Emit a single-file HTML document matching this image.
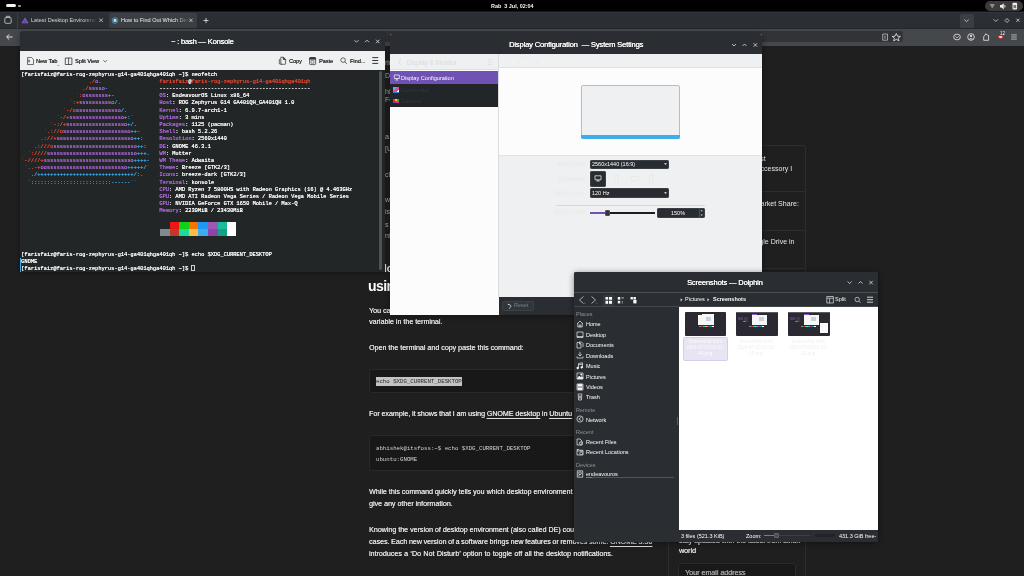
<!DOCTYPE html>
<html><head><meta charset="utf-8">
<style>
*{box-sizing:border-box}
html,body{margin:0;padding:0}
body{width:1024px;height:576px;overflow:hidden;position:relative;background:#1f1f1f;font-family:"Liberation Sans",sans-serif}
.a{position:absolute}
.t{position:absolute;white-space:pre;line-height:1;will-change:transform}
.ptxt,.ptxt2{will-change:transform}
.ptxt{font:7.1px/1 "Liberation Sans";color:#e2e2e2;white-space:pre;text-shadow:0.2px 0 0 #d8d8d8}
.ptxt u{text-decoration-thickness:0.6px;text-underline-offset:1.5px}
.ptxt2{font:7.05px/1 "Liberation Sans";color:#e6e6e6}
.code{background:#181818;border:1px solid #292929;border-radius:3px}
.frag{font:7px/1 "Liberation Sans";color:#b0b0b0}
/* top bar */
#top{left:0;top:0;width:1024px;height:12px;background:linear-gradient(#000 0 11px,#16171a 11px)}
/* firefox */
#tabs{left:0;top:12px;width:1024px;height:17px;background:#2b2e33}
#nav{left:0;top:29px;width:1024px;height:17px;background:#44474c}
#url{left:20px;top:31px;width:883px;height:13px;background:#2b2d31;border-radius:2px}
/* konsole */
#kon{left:20px;top:32px;width:365px;height:240px;background:#232627;overflow:hidden;box-shadow:0 1px 5px rgba(0,0,0,0.35);border-radius:2px 2px 0 0}
#kon .tb{left:0;top:0;width:365px;height:19px;background:#2a2e32}
#kon .tool{left:0;top:19px;width:365px;height:19px;background:#eff0f1}
#term{left:1.1px;top:39.5px;font:5.4px/7.2px "Liberation Mono",monospace;letter-spacing:-0.022px;color:#fcfcfc;white-space:pre;text-shadow:0.2px 0 0 currentColor}
.r{color:#e6452e}.m{color:#ad66dc}.b{color:#36a8f0}
.tl{font:5.5px/1 "Liberation Sans";color:#232629;text-shadow:0.2px 0 0 #232629}
/* settings */
#set{left:390px;top:34px;width:372px;height:281px;background:#fcfcfc;overflow:hidden;box-shadow:0 1px 6px rgba(0,0,0,0.4);border-radius:2px 2px 0 0}
.lbl{font:5.5px/1 "Liberation Sans";color:#fafafa;text-shadow:0 0 0.9px #c4c5c6}
.dd{background:#292c30;border:0.6px solid #3b4045;border-radius:1.2px}
.ddt{font:5.5px/1 "Liberation Sans";color:#fcfcfc}
.plab{font:5.5px/1 "Liberation Sans";color:#8d9094}
.pit{font:5.5px/1 "Liberation Sans";color:#fcfcfc}
.thumb{width:41.5px;height:23.7px;background:#2b2a33;border-radius:1px;overflow:hidden}
.fn{font:4.6px/6px "Liberation Sans";color:#fafafa;text-align:center;text-shadow:0 0 0.4px #e6e6e6}
/* dolphin */
#dol{left:574px;top:272px;width:304px;height:269.8px;background:#2a2e32;overflow:hidden;box-shadow:0 1px 6px rgba(0,0,0,0.45);border-radius:2px 2px 0 0}
</style></head><body>
<!-- page content -->
<div id="page" class="a" style="left:0;top:0;width:1024px;height:576px;background:#1f1f1f">
  <div class="t" style="left:368.4px;top:278.3px;font:bold 14px 'Liberation Sans';letter-spacing:-0.6px;color:#fff">using</div>
  <div class="t" style="left:384px;top:262.5px;font:bold 10px 'Liberation Sans';color:#f4f4f4">lo</div>
  <div class="a ptxt" style="left:368.9px;top:308.0px">You can also check the value of XDG_CURRENT_DESKTOP environment</div>
  <div class="a ptxt" style="left:368.9px;top:319.2px">variable in the terminal.</div>
  <div class="a ptxt" style="left:368.9px;top:345.2px">Open the terminal and copy paste this command:</div>
  <div class="a code" style="left:369px;top:368.5px;width:290px;height:24.5px"></div>
  <div class="t" style="left:376px;top:377px;height:9px;width:86px;background:#c4c4c4;color:#2a2a2a;font:5.73px/9px 'Liberation Mono'">echo $XDG_CURRENT_DESKTOP</div>
  <div class="a ptxt" style="left:368.9px;top:411.3px;word-spacing:-0.22px">For example, it shows that I am using <u>GNOME desktop</u> in <u>Ubuntu</u></div>
  <div class="a code" style="left:369px;top:434.5px;width:290px;height:36.5px"></div>
  <div class="t" style="left:376px;top:444.8px;color:#d4d4d4;font:5.73px 'Liberation Mono'">abhishek@itsfoss:~$ echo $XDG_CURRENT_DESKTOP</div>
  <div class="t" style="left:376px;top:455.5px;color:#d4d4d4;font:5.73px 'Liberation Mono'">ubuntu:GNOME</div>
  <div class="a ptxt" style="left:368.9px;top:489.3px">While this command quickly tells you which desktop environment is being used, it doesn't</div>
  <div class="a ptxt" style="left:368.9px;top:501.0px">give any other information.</div>
  <div class="a ptxt" style="left:368.9px;top:527.3px">Knowing the version of desktop environment (also called DE) could be helpful in some</div>
  <div class="a ptxt" style="left:368.9px;top:538.8px;word-spacing:-0.36px">cases. Each new version of a software brings new features or removes some. <u>GNOME 3.36</u></div>
  <div class="a ptxt" style="left:368.9px;top:550.8px;word-spacing:0.36px">introduces a ‘Do Not Disturb’ option to toggle off all the desktop notifications.</div>
  <!-- sidebar -->
  <div class="a" style="left:668px;top:145px;width:138px;height:124px;border:1px solid #2d2d2d;border-radius:3px"></div>
  <div class="a" style="left:668px;top:191px;width:138px;height:1px;background:#2d2d2d"></div>
  <div class="a" style="left:668px;top:230px;width:138px;height:1px;background:#2d2d2d"></div>
  <div class="t ptxt2" style="right:258px;top:154.5px">This Is The Best</div>
  <div class="t ptxt2" style="right:231.5px;top:164.5px">The Most Useful Accessory I</div>
  <div class="t ptxt2" style="right:225px;top:199.5px">Linux Desktop Market Share:</div>
  <div class="t ptxt2" style="right:229.5px;top:237.5px">Using Google Drive in</div>
  <div class="a" style="left:668px;top:269px;width:1px;height:307px;background:#2d2d2d"></div>
  <div class="a" style="left:805px;top:269px;width:1px;height:307px;background:#2d2d2d"></div>
  <div class="a ptxt" style="left:678.5px;top:538.3px">stay updated with the latest from Linux</div>
  <div class="a ptxt" style="left:678.5px;top:548px">world</div>
  <div class="a" style="left:678px;top:562.5px;width:118px;height:20px;background:#191919;border:1px solid #2b2b2b;border-radius:3px"></div>
  <div class="a ptxt" style="left:685px;top:570px;color:#8a8a8a">Your email address</div>
  <!-- fragments between konsole and settings -->
  <div class="t frag" style="left:384.5px;top:59px">rir</div>
  <div class="t frag" style="left:384.5px;top:72px">DU</div>
  <div class="t frag" style="left:384.5px;top:88px">hi</div>
  <div class="t frag" style="left:384.5px;top:96px">Fe</div>
  <div class="t frag" style="left:384.5px;top:133px">a</div>
  <div class="t frag" style="left:384.5px;top:145px">[U</div>
  <div class="t frag" style="left:384.5px;top:171px">cl</div>
  <div class="t frag" style="left:384.5px;top:196px">w</div>
  <div class="t frag" style="left:384.5px;top:208px">is</div>
  <div class="t frag" style="left:384.5px;top:221px">s</div>
  <div class="t frag" style="left:384.5px;top:232px">nf</div>
</div>

<!-- top bar -->
<div id="top" class="a">
  <div class="a" style="left:6px;top:4px;width:10px;height:3px;background:#f4f4f4;border-radius:1.5px"></div>
  <div class="a" style="left:18.4px;top:4.8px;width:2.4px;height:2.2px;background:#9c9c9c;border-radius:1.1px"></div>
  <div class="t" style="left:490.5px;top:4px;font:bold 5.45px/1 'Liberation Sans';color:#f4f4f4">Rab  3 Jul, 02:04</div>
  <div class="a" style="left:985px;top:1px;width:37.5px;height:9.5px;background:#3b3b3b;border-radius:5px"></div>
  <svg class="a" style="left:985px;top:1px" width="38" height="10">
    <path d="M4.5 3 L10 3 L7.25 7.5 Z" fill="#8d8d8d"/>
    <path d="M15 4 h1.5 l2.2 -1.8 v6.2 l-2.2 -1.8 h-1.5 z M19.5 3.5 a2 2 0 0 1 0 3.5" fill="#f0f0f0"/>
    <rect x="27.5" y="1.8" width="4.6" height="6.6" rx="0.8" fill="#f0f0f0"/><rect x="28.4" y="4" width="2.8" height="3.2" fill="#777"/>
  </svg>
</div>
<!-- firefox tab bar -->
<div id="tabs" class="a">
  <div class="a" style="left:0;top:0;width:1024px;height:1px;background:#31343a"></div>
  <div class="a" style="left:0;top:16px;width:1024px;height:1px;background:#25272b"></div>
  <div class="a" style="left:16.5px;top:0;width:1px;height:17px;background:#3a3d42"></div>
  <svg class="a" style="left:0;top:0" width="230" height="17" fill="none" stroke="#cfd0d2" stroke-width="0.8">
    <rect x="4.8" y="5.5" width="6.4" height="5.8" rx="1.3"/><path d="M6.3 5.5 v-1.2 h3.4 v1.2"/>
    <path d="M25 5.5 L28.5 11.3 L21.5 11.3 Z" fill="#8d5fd6" stroke="none"/><path d="M25 7.2 L27.2 10.8 L22.8 10.8 Z" fill="#6a43b0" stroke="none"/>
    <path d="M99.3 6.5 L102.8 10 M102.8 6.5 L99.3 10"/>
  </svg>
  <div class="t" style="left:31px;top:6.3px;width:66px;overflow:hidden;font:5.55px/1 'Liberation Sans';color:#d4d5d7;-webkit-mask-image:linear-gradient(90deg,#000 80%,transparent)">Latest Desktop Environment</div>
  <div class="a" style="left:109px;top:1px;width:88px;height:14.5px;background:#3b3e43;border-radius:2px"></div>
  <svg class="a" style="left:0;top:0" width="230" height="17" fill="none" stroke="#d8d9db" stroke-width="0.8">
    <circle cx="115" cy="8.5" r="3" fill="#2d6b9e" stroke="#6b8fb0" stroke-width="0.6"/><path d="M113.5 8 q1.5 -2 3 0 v2 h-3 z" fill="#e9b52c" stroke="none"/><circle cx="115" cy="8" r="1" fill="#f2f2f2" stroke="none"/>
    <path d="M189.3 6.7 L192.6 10 M192.6 6.7 L189.3 10"/>
    <path d="M206 6 V11 M203.5 8.5 H208.5" stroke-width="0.9"/>
  </svg>
  <div class="t" style="left:120.5px;top:6.3px;width:68px;overflow:hidden;font:5.55px/1 'Liberation Sans';color:#eeeeef;-webkit-mask-image:linear-gradient(90deg,#000 80%,transparent)">How to Find Out Which Desktop</div>
  <div class="a" style="left:959.5px;top:1.5px;width:14px;height:14px;background:#3b3e43;border-radius:2px"></div>
  <svg class="a" style="left:900px;top:0" width="124" height="17" fill="none" stroke="#d8d9db" stroke-width="0.8">
    <path d="M64.3 7.5 L66.5 9.7 L68.7 7.5"/>
    <path d="M93.6 7.3 L95.8 9.5 L98 7.3"/>
    <path d="M107 6.5 L109 8.5 L107 10.5 L105 8.5 Z"/>
    <path d="M116.3 6.6 L119.5 9.8 M119.5 6.6 L116.3 9.8"/>
  </svg>
</div>
<div id="nav" class="a">
  <div class="a" style="left:20px;top:2.3px;width:883px;height:11px;background:#323337;border-radius:2px"></div>
  <svg class="a" style="left:0;top:0" width="1024" height="17" fill="none" stroke="#eeeeef" stroke-width="0.9">
    <path d="M6.8 8 H12.6 M9.3 5.3 L6.6 8 L9.3 10.7"/>
    <path d="M882.7 5 h4.8 v6.2 h-4.8 z M885 6.5 v3.4" stroke="#d0d1d3" stroke-width="0.7"/>
    <path d="M896.3 4.5 L897.6 7.2 L900.4 7.4 L898.2 9.2 L899 11.9 L896.3 10.4 L893.6 11.9 L894.4 9.2 L892.2 7.4 L895 7.2 Z" stroke-width="0.8"/>
    <rect x="953.8" y="5.3" width="6.4" height="5.4" rx="2.4" stroke-width="0.8"/><path d="M955.4 7.3 L957 8.9 L958.6 7.3" stroke-width="0.7"/>
    <circle cx="971" cy="8" r="3.3" stroke-width="0.8"/><circle cx="971" cy="7" r="1.1" fill="#eee" stroke="none"/><path d="M968.9 10.3 q2.1 -2 4.2 0" fill="#eee" stroke="none"/>
    <path d="M983.7 11.3 V7.5 L985 6.3 L985.6 4.8 L987.2 6 L988.6 6.3 L988.6 11.3 Z" stroke-width="0.8"/>
    <path d="M997.6 6.8 a3 3 0 0 0 6 0 z" fill="#d9322c" stroke="none"/><path d="M998.8 7.2 a1.8 1.8 0 0 0 3.6 0 z" fill="#f3f3f3" stroke="none"/>
    <path d="M1011.2 5.9 h5.6 M1011.2 8 h5.6 M1011.2 10.1 h5.6" stroke="#d4d5d7" stroke-width="0.75"/>
  </svg>
  <div class="t" style="left:999.6px;top:2.6px;font:4.6px/1 'Liberation Sans';color:#f2f2f2">12</div>
</div>

<!-- konsole -->
<div id="kon" class="a">
  <div class="a tb"></div>
  <div class="t" style="left:151px;top:6.2px;font:7.6px/1 'Liberation Sans';letter-spacing:-0.22px;color:#fcfcfc;text-shadow:0.2px 0 0 #fcfcfc">~ : bash — Konsole</div>
  <svg class="a" style="left:0;top:0" width="365" height="19" fill="none" stroke="#dfe1e3" stroke-width="0.8">
    <path d="M334.5 8.2 L336.5 10.2 L338.5 8.2"/>
    <path d="M345 10.2 L347 8.2 L349 10.2"/>
    <path d="M356 7.7 L359.5 11.2 M359.5 7.7 L356 11.2"/>
  </svg>
  <div class="a tool"></div>
  <svg class="a" style="left:0;top:19px" width="365" height="19" fill="none" stroke="#31363b" stroke-width="0.7">
    <path d="M7.5 6.5 h4 l2 2 v5 h-6 z M9 8.5 v3 M8 10 h2" />
    <path d="M45.3 7 h6.6 v6.5 h-6.6 z M48.6 7 v6.5" stroke-width="0.8"/>
    <path d="M83.3 9.2 L85.2 11 L87.1 9.2"/>
    <path d="M37.5 14.2 l0.8 0.8 l0.8 -0.8" stroke-width="0.5"/>
    <path d="M259.3 8 V12.3 Q259.3 13.2 260.2 13.2 H262" stroke-width="0.75"/>
    <path d="M260.8 6.2 H263.3 L265.6 8.5 V12.6 Q265.6 13.3 264.9 13.3 H261.5 Q260.8 13.3 260.8 12.6 Z" stroke-width="0.75"/>
    <path d="M263.3 6.2 V8.5 H265.6 Z" fill="#31363b"/>
    <rect x="289.6" y="6.6" width="6" height="7" rx="0.8" stroke-width="0.75"/>
    <path d="M289.6 7.4 Q289.6 6.6 290.4 6.6 H294.8 Q295.6 6.6 295.6 7.4 V8.2 H289.6 Z" fill="#31363b"/>
    <path d="M291 9.6 h3 v2.6 h-3 z" stroke-width="0.5"/>
    <circle cx="323.1" cy="9.1" r="2.3" stroke-width="0.75"/><path d="M324.8 10.8 L326.8 12.8" stroke-width="0.8"/>
    <path d="M352.3 6.6 h5.9 M352.3 9.5 h5.9 M352.3 12.4 h5.9" stroke-width="1"/>
  </svg>
  <div class="t tl" style="left:16.2px;top:26.5px">New Tab</div>
  <div class="t tl" style="left:54.8px;top:26.5px">Split View</div>
  <div class="t tl" style="left:269px;top:26.5px">Copy</div>
  <div class="t tl" style="left:299px;top:26.5px">Paste</div>
  <div class="t tl" style="left:330px;top:26.5px">Find...</div>
  <div class="a" style="left:359px;top:39px;width:3px;height:199px;background:#4d5256;border-radius:1.5px"></div>
  <div class="a" style="left:0;top:225.5px;width:1.3px;height:14.5px;background:#3daee9"></div>
  <div class="a" style="left:171px;top:232.8px;width:4px;height:6.7px;border:0.8px solid #d0d0d0"></div>
    <div class="a" style="left:139.6px;top:189.7px;width:76.8px;height:7.2px;background:linear-gradient(90deg,#232627 0 9.6px,#ed1515 9.6px 19.2px,#11d116 19.2px 28.8px,#f67400 28.8px 38.4px,#1d99f3 38.4px 48px,#9b59b6 48px 57.6px,#1abc9c 57.6px 67.2px,#fcfcfc 67.2px 76.8px)"></div>
  <div class="a" style="left:139.6px;top:196.9px;width:76.8px;height:7.2px;background:linear-gradient(90deg,#7f8c8d 0 9.6px,#c0392b 9.6px 19.2px,#1cdc9a 19.2px 28.8px,#fdbc4b 28.8px 38.4px,#3daee9 38.4px 48px,#8e44ad 48px 57.6px,#16a085 57.6px 67.2px,#ffffff 67.2px 76.8px)"></div>
  <div id="term" class="a">[farisfaiz@faris-rog-zephyrus-g14-ga401qhga401qh ~]$ neofetch
<span class="r">                     ./</span><span class="m">o</span><span class="b">.</span>                  <span class="r">farisfaiz</span>@<span class="r">faris-rog-zephyrus-g14-ga401qhga401qh</span>
<span class="r">                   ./</span><span class="m">sssso</span><span class="b">-</span>                -----------------------------------------------
<span class="r">                 `:</span><span class="m">osssssss+</span><span class="b">-</span>              <span class="m">OS</span>: EndeavourOS Linux x86_64
<span class="r">               `:+</span><span class="m">sssssssssso</span><span class="b">/.</span>            <span class="m">Host</span>: ROG Zephyrus G14 GA401QH_GA401QH 1.0
<span class="r">             `-/o</span><span class="m">ssssssssssssso</span><span class="b">/.</span>          <span class="m">Kernel</span>: 6.9.7-arch1-1
<span class="r">           `-/+</span><span class="m">sssssssssssssssso</span><span class="b">+:`</span>        <span class="m">Uptime</span>: 3 mins
<span class="r">         `-:/+</span><span class="m">sssssssssssssssssso</span><span class="b">+/.</span>       <span class="m">Packages</span>: 1125 (pacman)
<span class="r">       `.://o</span><span class="m">sssssssssssssssssssso</span><span class="b">++-</span>      <span class="m">Shell</span>: bash 5.2.26
<span class="r">      .://+</span><span class="m">ssssssssssssssssssssssso</span><span class="b">++:</span>     <span class="m">Resolution</span>: 2560x1440
<span class="r">    .:///o</span><span class="m">ssssssssssssssssssssssssso</span><span class="b">++:</span>    <span class="m">DE</span>: GNOME 46.3.1
<span class="r">  `:////</span><span class="m">ssssssssssssssssssssssssssso</span><span class="b">+++.</span>   <span class="m">WM</span>: Mutter
<span class="r">`-////+</span><span class="m">ssssssssssssssssssssssssssso</span><span class="b">++++-</span>   <span class="m">WM Theme</span>: Adwaita
<span class="r"> `..-+</span><span class="m">oosssssssssssssssssssssssso</span><span class="b">+++++/`</span>   <span class="m">Theme</span>: Breeze [GTK2/3]
<span class="b">   ./++++++++++++++++++++++++++++++/:.</span>     <span class="m">Icons</span>: breeze-dark [GTK2/3]
<span class="b">  `:::::::::::::::::::::::::------``</span>       <span class="m">Terminal</span>: konsole
                                           <span class="m">CPU</span>: AMD Ryzen 7 5800HS with Radeon Graphics (16) @ 4.463GHz
                                           <span class="m">GPU</span>: AMD ATI Radeon Vega Series / Radeon Vega Mobile Series
                                           <span class="m">GPU</span>: NVIDIA GeForce GTX 1650 Mobile / Max-Q
                                           <span class="m">Memory</span>: 2230MiB / 23430MiB





[farisfaiz@faris-rog-zephyrus-g14-ga401qhga401qh ~]$ echo $XDG_CURRENT_DESKTOP
GNOME
[farisfaiz@faris-rog-zephyrus-g14-ga401qhga401qh ~]$ <span class="cur"> </span></div>
</div>

<!-- system settings -->
<div id="set" class="a">
  <div class="a" style="left:0;top:0;width:372px;height:20px;background:#2a2e32"></div>
  <div class="t" style="left:118.8px;top:7.2px;font:7.6px/1 'Liberation Sans';letter-spacing:-0.17px;color:#fcfcfc;text-shadow:0.15px 0 0 #fcfcfc">Display Configuration  — System Settings</div>
  <svg class="a" style="left:0;top:0" width="372" height="20" fill="none" stroke="#dfe1e3" stroke-width="0.8">
    <path d="M342 10 L344 12 L346 10"/>
    <path d="M352.6 12 L354.6 10 L356.6 12"/>
    <path d="M363.6 9.2 L367.1 12.7 M367.1 9.2 L363.6 12.7"/>
  </svg>
  <!-- left pane -->
  <div class="a" style="left:0;top:20px;width:108px;height:16px;background:#eff0f1;border-bottom:0.6px solid #e0e1e2"></div>
  <svg class="a" style="left:0;top:20px" width="108" height="16" fill="none" stroke="#d2d3d4" stroke-width="0.7">
    <path d="M11 5 L8.5 8 L11 11"/>
    <path d="M97.8 5.8 h4.6 M97.8 8.2 h4.6 M97.8 10.6 h4.6" stroke="#d6d7d8" stroke-width="0.6"/>
  </svg>
  <div class="t" style="left:16.5px;top:26px;font:6.4px/1 'Liberation Sans';color:#d9dadb">Display &amp; Monitor</div>
  <div class="a" style="left:0;top:37.4px;width:108px;height:12.6px;background:#6f52b3"></div>
  <svg class="a" style="left:0;top:37px" width="12" height="13" fill="none" stroke="#fff" stroke-width="0.7">
    <path d="M4.3 4 h5 v3.5 h-5 z M6.8 7.5 v1.5 M5.5 9 h2.6"/>
  </svg>
  <div class="t" style="left:11.3px;top:41.8px;font:5.55px/1 'Liberation Sans';color:#fcfcfc">Display Configuration</div>
  <div class="a" style="left:0;top:50px;width:108px;height:23px;background:#232629"></div>
  <div class="a" style="left:3.3px;top:53.3px;width:5.5px;height:5.5px;background:linear-gradient(135deg,#27c8d8 0 40%,#e84393 40% 70%,#fafafa 70%)"></div>
  <div class="a" style="left:3.3px;top:57.8px;width:5.5px;height:1px;background:#2c8ad6"></div>
  <div class="t" style="left:11.3px;top:53.5px;font:5.55px/1 'Liberation Sans';color:#34373a">Compositor</div>
  <div class="a" style="left:3.3px;top:64.5px;width:5.5px;height:4.5px;background:linear-gradient(90deg,#e5322d 0 33%,#f7d11e 33% 66%,#1fb23a 66%)"></div>
  <div class="a" style="left:3.3px;top:66.5px;width:5.5px;height:2.5px;background:linear-gradient(90deg,#7a3bd1 0 50%,#e23a88 50%)"></div>
  <div class="t" style="left:11.3px;top:65px;font:5.55px/1 'Liberation Sans';color:#34373a">Gamma</div>
  <div class="a" style="left:108px;top:20px;width:1px;height:243px;background:#dcdddf"></div>
  <!-- right pane -->
  <div class="a" style="left:109px;top:20px;width:263px;height:14px;background:#eff0f1;border-bottom:0.7px solid #dfe0e1"></div>
  <div class="t" style="left:116px;top:24.6px;font:7.55px/1 'Liberation Sans';color:#fcfcfc;text-shadow:0 0 0.8px #d4d5d6">Display Configuration</div>
  <div class="a" style="left:191px;top:50.6px;width:99px;height:54.4px;background:#eff0f1;border:0.8px solid #8ccbed;border-radius:2px"></div>
  <div class="a" style="left:191px;top:101px;width:99px;height:4px;background:#3daee9;border-radius:0 0 2px 2px"></div>
  <div class="t" style="left:191px;width:99px;text-align:center;top:69.5px;font:5.4px/7.2px 'Liberation Sans';color:#fbfbfb;text-shadow:0 0 0.7px #d6d7d8">Built-in Screen<br>(2560x1440)</div>
  <div class="a" style="left:109px;top:121px;width:263px;height:142px;background:#eff0f1;border-top:0.7px solid #e2e3e4"></div>
  <div class="t lbl" style="right:176px;top:128px">Resolution:</div>
  <div class="t lbl" style="right:176px;top:142.5px">Orientation:</div>
  <div class="t lbl" style="right:176px;top:156.5px">Refresh rate:</div>
  <div class="t lbl" style="right:176px;top:176px">Global scale:</div>
  <div class="a dd" style="left:200px;top:125.7px;width:79px;height:9.2px"></div>
  <div class="t ddt" style="left:201.8px;top:127.7px">2560x1440 (16:9)</div>
  <div class="a dd" style="left:200px;top:137px;width:16px;height:15.6px"></div>
  <div class="a dd" style="left:200px;top:154.3px;width:79px;height:9.5px"></div>
  <div class="t ddt" style="left:201.8px;top:156.5px">120 Hz</div>
  <svg class="a" style="left:0;top:0" width="372" height="281">
    <path d="M274 129.3 h3 l-1.5 1.7 z M274 158.3 h3 l-1.5 1.7 z" fill="#e8e8e8"/>
    <g fill="none" stroke="#fcfcfc" stroke-width="0.7"><path d="M205 141.8 h6 v4 h-6 z M208 145.8 v1.2 M206.3 147 h3.4"/></g>
    <g fill="none" stroke="#e4e5e6" stroke-width="0.7"><path d="M224.5 141 h3.5 v7.5 h-3.5 z M241.5 142.5 h7 v4.5 h-7 z M259.5 141 h3.5 v7.5 h-3.5 z"/></g>
  </svg>
  <div class="a" style="left:166px;top:171.2px;width:149px;height:0.8px;background:#d8d9da"></div>
  <div class="a" style="left:200px;top:178px;width:65px;height:1.5px;background:#1b1e20"></div>
  <div class="a" style="left:200px;top:178px;width:15px;height:1.5px;background:#7052b6"></div>
  <div class="a" style="left:214.5px;top:176px;width:5.5px;height:6px;background:#31363b;border:0.6px solid #4d5257;border-radius:1px"></div>
  <div class="a dd" style="left:267px;top:173.7px;width:47.7px;height:10px"></div>
  <div class="t ddt" style="left:281px;top:176.9px">150%</div>
  <div class="a" style="left:309px;top:174px;width:0.6px;height:9.5px;background:#4a4f54"></div>
  <svg class="a" style="left:0;top:0" width="372" height="281"><path d="M310.5 177.2 l1.2 -1.4 l1.2 1.4 z M310.5 180.5 l1.2 1.4 l1.2 -1.4 z" fill="#d0d0d0"/></svg>
  <!-- footer -->
  <div class="a" style="left:109px;top:263px;width:263px;height:18px;background:#2a2e32"></div>
  <div class="a" style="left:112px;top:267px;width:32px;height:9.5px;background:#31363b;border:0.6px solid #3d4247;border-radius:1.5px"></div>
  <svg class="a" style="left:112px;top:267px" width="32" height="10" fill="none" stroke="#d8d9da" stroke-width="0.8"><circle cx="6.4" cy="3.4" r="0.6" fill="#e8e8e8" stroke="none"/><path d="M7 3.6 Q9.4 4 8.8 5.4 L7.2 7.8"/></svg>
  <div class="t" style="left:124.2px;top:269.3px;font:5.5px/1 'Liberation Sans';color:#7d8185">Reset</div>
</div>

<!-- dolphin -->
<div id="dol" class="a">
  <div class="a" style="left:0;top:0;width:304px;height:20.5px;background:#2a2e32"></div>
  <div class="t" style="left:113.2px;top:7.1px;font:7.6px/1 'Liberation Sans';letter-spacing:-0.2px;color:#fcfcfc;text-shadow:0.15px 0 0 #fcfcfc">Screenshots — Dolphin</div>
  <svg class="a" style="left:0;top:0" width="304" height="21" fill="none" stroke="#dfe1e3" stroke-width="0.8">
    <path d="M273.6 9.5 L275.6 11.5 L277.6 9.5"/>
    <path d="M284.5 11.5 L286.5 9.5 L288.5 11.5"/>
    <path d="M295.3 8.8 L298.8 12.3 M298.8 8.8 L295.3 12.3"/>
  </svg>
  <div class="a" style="left:0;top:20.3px;width:304px;height:0.8px;background:#4b4f54"></div>
  <div class="a" style="left:0;top:21px;width:304px;height:14px;background:#2a2e32"></div>
  <div class="a" style="left:0;top:34.4px;width:304px;height:1px;background:#43474c"></div>
  <svg class="a" style="left:0;top:21px" width="304" height="14" fill="none" stroke="#dfe1e3" stroke-width="0.7">
    <path d="M9.5 3.5 L5.5 7 L9.5 10.5 M17.5 3.5 L21.5 7 L17.5 10.5"/>
    <path d="M10.5 10.2 h0.8 M22.5 10.2 h0.6" stroke-width="0.6"/>
    <rect x="29.3" y="2.3" width="10.9" height="10.5" rx="1" fill="#33373c" stroke="#3e4247" stroke-width="0.5"/>
    <g fill="#fcfcfc" stroke="none">
      <rect x="31.5" y="4" width="2.6" height="2.6"/><rect x="35" y="4" width="3" height="2.8"/><rect x="31.5" y="7.8" width="2.6" height="3"/><rect x="35" y="7.8" width="3" height="3"/>
      <rect x="43.8" y="4" width="2.4" height="2.6"/><rect x="47.3" y="4.6" width="2.6" height="0.7"/><rect x="43.8" y="7.8" width="2.4" height="2.6"/><rect x="47.8" y="8" width="0.8" height="0.8"/><rect x="47.8" y="9.6" width="0.8" height="0.8"/>
      <rect x="56.5" y="4" width="2.4" height="2.4"/><rect x="59.5" y="4" width="2.4" height="2.4"/><rect x="59.3" y="6.8" width="3.2" height="3.6"/>
    </g>
    <path d="M106.6 5.2 l1.9 1.6 l-1.9 1.6 z M133.4 5.2 l1.9 1.6 l-1.9 1.6 z" fill="#d6d8da" stroke="none"/>
    <path d="M252.8 3.5 h6.6 v6.5 h-6.6 z M252.8 5.2 h6.6 M255.6 5.2 v4.8" />
    <circle cx="283.2" cy="6.5" r="2.2"/><path d="M284.8 8.1 L286.6 9.9"/>
    <path d="M293 4.2 h6 M293 6.7 h6 M293 9.2 h6" stroke-width="0.9"/>
  </svg>
  <div class="t pit" style="left:110.5px;top:24.8px">Pictures</div>
  <div class="t pit" style="left:139.3px;top:24.8px;font-weight:bold">Screenshots</div>
  <div class="t pit" style="left:261px;top:24.8px">Split</div>
  <!-- places -->
  <div class="t plab" style="left:2px;top:40.0px">Places</div>
  <div class="t plab" style="left:2px;top:135.5px">Remote</div>
  <div class="t plab" style="left:2px;top:157.8px">Recent</div>
  <div class="t plab" style="left:2px;top:190.7px">Devices</div>
  <svg class="a" style="left:2.3px;top:48.1px" width="8" height="8" fill="none" stroke="#fcfcfc" stroke-width="0.65"><path d="M1 4 L4 1 L7 4 M1.8 3.4 V7 H6.2 V3.4 M3.2 7 V5 H4.8 V7"/></svg>
  <div class="t pit" style="left:11.6px;top:50.4px">Home</div>
  <svg class="a" style="left:2.3px;top:58.6px" width="8" height="8" fill="none" stroke="#fcfcfc" stroke-width="0.65"><path d="M1 1 H7 V6.5 H1 Z M1 5.5 H7"/></svg>
  <div class="t pit" style="left:11.6px;top:60.9px">Desktop</div>
  <svg class="a" style="left:2.3px;top:69.0px" width="8" height="8" fill="none" stroke="#fcfcfc" stroke-width="0.65"><path d="M1 1.5 H3.5 L5 3 V7 H1 Z M3 1 H5.5 L7 2.5 V6 M3.5 1.5 V3 H5"/></svg>
  <div class="t pit" style="left:11.6px;top:71.3px">Documents</div>
  <svg class="a" style="left:2.3px;top:79.4px" width="8" height="8" fill="none" stroke="#fcfcfc" stroke-width="0.65"><path d="M4 0.8 V5 M2.2 3.2 L4 5 L5.8 3.2 M1 5.5 V7 H7 V5.5"/></svg>
  <div class="t pit" style="left:11.6px;top:81.7px">Downloads</div>
  <svg class="a" style="left:2.3px;top:89.6px" width="8" height="8" fill="none" stroke="#fcfcfc" stroke-width="0.65"><path d="M2.5 6 V1.5 L6.5 0.8 V5.3 M2.5 2.8 L6.5 2.2" /><circle cx="1.7" cy="6" r="0.9" fill="#fcfcfc"/><circle cx="5.7" cy="5.3" r="0.9" fill="#fcfcfc"/></svg>
  <div class="t pit" style="left:11.6px;top:91.9px">Music</div>
  <svg class="a" style="left:2.3px;top:100.2px" width="8" height="8" fill="none" stroke="#fcfcfc" stroke-width="0.65"><path d="M1 1 H7 V7 H1 Z"/><path d="M1.3 6.7 L3.3 4 L4.8 5.6 L5.8 4.6 L6.7 5.6 V6.7 Z" fill="#fcfcfc"/><circle cx="5.3" cy="2.6" r="0.7" fill="#fcfcfc"/></svg>
  <div class="t pit" style="left:11.6px;top:102.5px">Pictures</div>
  <svg class="a" style="left:2.3px;top:110.6px" width="8" height="8" fill="none" stroke="#fcfcfc" stroke-width="0.65"><path d="M1 1 H7 V7 H1 Z M1 3.2 H7 M1 4.8 H7"/><path d="M2 1.3 H6 V3 H2 Z M2 5 H6 V6.7 H2Z" fill="#fcfcfc"/></svg>
  <div class="t pit" style="left:11.6px;top:112.9px">Videos</div>
  <svg class="a" style="left:2.3px;top:120.8px" width="8" height="8" fill="none" stroke="#fcfcfc" stroke-width="0.65"><path d="M1.8 1 H6.2 M2.2 1.5 L2.6 7 H5.4 L5.8 1.5 M3.2 2.5 L4.8 5.5 M4.8 2.5 L3.2 5.5"/></svg>
  <div class="t pit" style="left:11.6px;top:123.1px">Trash</div>
  <svg class="a" style="left:2.3px;top:143.4px" width="8" height="8" fill="none" stroke="#fcfcfc" stroke-width="0.65"><circle cx="4" cy="4" r="3.1"/><path d="M5.3 2.3 L2.8 4 L5.3 5.7"/></svg>
  <div class="t pit" style="left:11.6px;top:145.7px">Network</div>
  <svg class="a" style="left:2.3px;top:165.6px" width="8" height="8" fill="none" stroke="#fcfcfc" stroke-width="0.65"><path d="M1 1 H4 L6 3 V7 H1 Z"/><circle cx="5" cy="5.3" r="1.6" fill="#2a2e32"/><path d="M5 4.5 V5.4 H5.8"/></svg>
  <div class="t pit" style="left:11.6px;top:167.9px">Recent Files</div>
  <svg class="a" style="left:2.3px;top:176.1px" width="8" height="8" fill="none" stroke="#fcfcfc" stroke-width="0.65"><path d="M1 1.5 H3 L3.8 2.3 H7 V7 H1 Z M1 3 H7"/><circle cx="5.2" cy="5.3" r="1.4" fill="#2a2e32"/></svg>
  <div class="t pit" style="left:11.6px;top:178.4px">Recent Locations</div>
  <svg class="a" style="left:2.3px;top:197.6px" width="8" height="8" fill="none" stroke="#fcfcfc" stroke-width="0.65"><path d="M1.3 0.8 H6.7 V7.2 H1.3 Z"/><circle cx="4" cy="3.2" r="1.4"/><path d="M2.5 6.2 L4 3.8"/></svg>
  <div class="t pit" style="left:11.6px;top:199.9px">endeavouros</div>

  <div class="a" style="left:12px;top:205px;width:88px;height:1.2px;background:#52565b;border-radius:1px"></div>
  <div class="a" style="left:12px;top:205px;width:6px;height:1.2px;background:#8e63d6"></div>
  <div class="a" style="left:102.7px;top:145px;width:0.6px;height:8px;background:#5a5e63"></div>
  <!-- files -->
  <div class="a" style="left:105px;top:35.4px;width:199px;height:222.6px;background:#fff"></div>
  <div class="a" style="left:109px;top:65px;width:44.5px;height:23.5px;background:#e9e4f4;border:0.6px solid #d5cdea;border-radius:1.5px"></div>
  <div class="thumb a" style="left:110.6px;top:40.1px"><div class="a" style="left:13.6px;top:2.3px;width:15.8px;height:10.7px;background:#f6f6f6"></div><div class="a" style="left:13.6px;top:2.3px;width:4px;height:1px;background:#333"></div><div class="a" style="left:21px;top:5px;width:5px;height:4px;background:#c9d3df"></div><div class="a" style="left:14px;top:13.5px;width:15px;height:1.6px;background:linear-gradient(90deg,#7f8c8d 0 12%,#c0392b 12% 25%,#1cdc9a 25% 37%,#fdbc4b 37% 50%,#3daee9 50% 62%,#8e44ad 62% 75%,#16a085 75% 87%,#fff 87%)"></div></div>
  <div class="thumb a" style="left:162px;top:40.1px"><div class="a" style="left:0;top:0;width:41.5px;height:1.2px;background:#5a5a62"></div><div class="a" style="left:16px;top:2.5px;width:15.2px;height:10.5px;background:#f6f6f6"></div><div class="a" style="left:16px;top:1.5px;width:5px;height:1px;background:#8a5ad8"></div><div class="a" style="left:23px;top:5px;width:5px;height:4px;background:#c9d3df"></div><div class="a" style="left:2px;top:4.5px;width:5px;height:3px;background:#4c3b66"></div><div class="a" style="left:8px;top:4.5px;width:4px;height:5px;background:#3c3c46"></div><div class="a" style="left:7px;top:8.5px;width:3px;height:1px;background:#3d8ad0"></div><div class="a" style="left:13px;top:13.5px;width:15px;height:1.6px;background:linear-gradient(90deg,#7f8c8d 0 12%,#c0392b 12% 25%,#1cdc9a 25% 37%,#fdbc4b 37% 50%,#3daee9 50% 62%,#8e44ad 62% 75%,#16a085 75% 87%,#fff 87%)"></div></div>
  <div class="thumb a" style="left:214px;top:40.1px"><div class="a" style="left:0;top:0;width:41.5px;height:1.2px;background:#5a5a62"></div><div class="a" style="left:15.6px;top:2.5px;width:15.4px;height:10.5px;background:#f6f6f6"></div><div class="a" style="left:15.6px;top:1.5px;width:5px;height:1px;background:#8a5ad8"></div><div class="a" style="left:22.5px;top:5px;width:5px;height:4px;background:#c9d3df"></div><div class="a" style="left:2px;top:4.5px;width:5px;height:3px;background:#4c3b66"></div><div class="a" style="left:8px;top:4.5px;width:4px;height:5px;background:#3c3c46"></div><div class="a" style="left:7px;top:8.5px;width:3px;height:1px;background:#3d8ad0"></div><div class="a" style="left:32.4px;top:11.2px;width:8px;height:9.6px;background:#fafafa"></div><div class="a" style="left:12.5px;top:13.5px;width:15px;height:1.6px;background:linear-gradient(90deg,#7f8c8d 0 12%,#c0392b 12% 25%,#1cdc9a 25% 37%,#fdbc4b 37% 50%,#3daee9 50% 62%,#8e44ad 62% 75%,#16a085 75% 87%,#fff 87%)"></div></div>
  <div class="t fn" style="left:109px;width:44.5px;top:67px">Screenshot from<br>2024-07-03 02-01-<br>44.png</div>
  <div class="t fn" style="left:160px;width:44.5px;top:67px">Screenshot from<br>2024-07-03 02-02-<br>15.png</div>
  <div class="t fn" style="left:212px;width:44.5px;top:67px">Screenshot from<br>2024-07-03 02-03-<br>31.png</div>
  <!-- status -->
  <div class="a" style="left:105px;top:258px;width:199px;height:12px;background:#2a2e32"></div>
  <div class="t pit" style="left:107px;top:261.8px">3 files (521.3 KiB)</div>
  <div class="t pit" style="left:171.7px;top:261.8px">Zoom:</div>
  <div class="a" style="left:190px;top:263.3px;width:46px;height:0.9px;background:#3b3f44"></div>
  <div class="a" style="left:190px;top:262.8px;width:10px;height:1.4px;background:#8e63d6"></div>
  <div class="a" style="left:200px;top:261.2px;width:4.5px;height:4.6px;background:#4a4e53;border:0.5px solid #5d6166;border-radius:0.8px"></div>
  <div class="a" style="left:240.5px;top:261.5px;width:20px;height:3.5px;background:#1f2226;border-radius:1px"></div>
  <div class="t pit" style="left:265.2px;top:261.8px">431.3 GiB free-</div>
</div>
</body></html>
